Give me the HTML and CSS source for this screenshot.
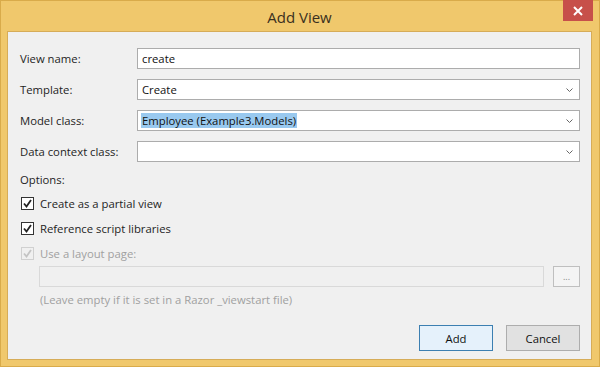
FILE: index.html
```html
<!DOCTYPE html>
<html>
    <head>
        <title>Add View</title>
        <link rel="stylesheet" href="styles.css">
    </head>
    <body>
        <div class="window">
            <div class="title-bar">
                <span class="title">Add View</span>
                <button class="close">
                    <svg width="10" height="10" viewBox="0 0 10 10">
                        <path d="M1 1 L9 9 M9 1 L1 9" stroke="#fff" stroke-width="2"/>
                    </svg>
                </button>
            </div>
            <div class="content">
                <div class="fields">
                    <label class="label">View name:</label>
                    <div class="input">create</div>

                    <label class="label">Template:</label>
                    <div class="input select">
                        <span>Create</span>
                        <svg class="arrow" width="7" height="4" viewBox="0 0 7 4"><path d="M0.5 0.5 L3.5 3.5 L6.5 0.5" fill="none" stroke="#666" stroke-width="1"/></svg>
                    </div>

                    <label class="label">Model class:</label>
                    <div class="input select">
                        <span class="selected">Employee (Example3.Models)</span>
                        <svg class="arrow" width="7" height="4" viewBox="0 0 7 4"><path d="M0.5 0.5 L3.5 3.5 L6.5 0.5" fill="none" stroke="#666" stroke-width="1"/></svg>
                    </div>

                    <label class="label">Data context class:</label>
                    <div class="input select">
                        <span></span>
                        <svg class="arrow" width="7" height="4" viewBox="0 0 7 4"><path d="M0.5 0.5 L3.5 3.5 L6.5 0.5" fill="none" stroke="#666" stroke-width="1"/></svg>
                    </div>
                </div>

                <div class="options-title">Options:</div>
                <div class="options">
                    <div class="check-row">
                        <span class="checkbox">
                            <svg width="11" height="11" viewBox="0 0 11 11"><path d="M2 5.5 L4.5 8.5 L9 2" fill="none" stroke="#222" stroke-width="1.8"/></svg>
                        </span>
                        <span>Create as a partial view</span>
                    </div>
                    <div class="check-row">
                        <span class="checkbox">
                            <svg width="11" height="11" viewBox="0 0 11 11"><path d="M2 5.5 L4.5 8.5 L9 2" fill="none" stroke="#222" stroke-width="1.8"/></svg>
                        </span>
                        <span>Reference script libraries</span>
                    </div>
                    <div class="check-row disabled">
                        <span class="checkbox">
                            <svg width="11" height="11" viewBox="0 0 11 11"><path d="M2 5.5 L4.5 8.5 L9 2" fill="none" stroke="#c4c4c4" stroke-width="1.8"/></svg>
                        </span>
                        <span>Use a layout page:</span>
                    </div>
                </div>

                <div class="layout-row">
                    <div class="input layout-input"></div>
                    <button class="browse">...</button>
                </div>
                <div class="hint">(Leave empty if it is set in a Razor _viewstart file)</div>

                <div class="actions">
                    <button class="btn default">Add</button>
                    <button class="btn">Cancel</button>
                </div>
            </div>
        </div>
    </body>
</html>
```

FILE: styles.css
```css
body {
    margin: 0;
    font-family: "Open Sans", "Noto Sans", sans-serif;
    font-size: 11.3px;
    color: #1e1e1e;
}

.window {
    width: 600px;
    height: 367px;
    box-sizing: border-box;
    border: 1px solid #d9ab4a;
    background-color: #f0c86c;
    padding: 0 7px 6px 6px;
    display: flex;
    flex-direction: column;
}

.title-bar {
    height: 30px;
    display: flex;
    align-items: center;
    justify-content: center;
    position: relative;
}

.title {
    font-size: 15px;
    color: #3a3020;
    margin-top: 2px;
}

.close {
    position: absolute;
    top: -1px;
    right: -1px;
    width: 30px;
    height: 21px;
    border: 0;
    background-color: #c7504a;
    display: flex;
    align-items: center;
    justify-content: center;
    padding: 0;
}

.content {
    flex: 1;
    border: 1px solid #d6ac58;
    background-color: #f0f0f0;
    padding: 16px 11px 0 12px;
    display: flex;
    flex-direction: column;
}

.fields {
    display: grid;
    grid-template-columns: 117px 1fr;
    row-gap: 10px;
    align-items: center;
}

.input {
    height: 21px;
    box-sizing: border-box;
    border: 1px solid #acacac;
    background-color: #fff;
    padding: 0 4px;
    display: flex;
    align-items: center;
    color: #111;
}

.select {
    justify-content: space-between;
    padding-right: 6px;
}

.selected {
    background-color: #99c9ef;
    padding: 0 1px;
    margin-left: -1px;
}

.options-title {
    margin-top: 10px;
    height: 16px;
}

.options {
    display: flex;
    flex-direction: column;
    gap: 9px;
    margin-top: 7px;
    padding-left: 1px;
}

.check-row {
    display: flex;
    align-items: center;
    gap: 6px;
    height: 16px;
}

.checkbox {
    width: 13px;
    height: 13px;
    box-sizing: border-box;
    border: 1px solid #333;
    background-color: #fff;
    display: flex;
    align-items: center;
    justify-content: center;
}

.disabled {
    color: #a0a0a0;
}

.disabled .checkbox {
    border-color: #d0d0d0;
    background-color: #f0f0f0;
}

.layout-row {
    display: flex;
    gap: 9px;
    margin-top: 5px;
    padding-left: 19px;
}

.layout-input {
    flex: 1;
    border-color: #d9d9d9;
    background-color: #f0f0f0;
}

.browse {
    width: 27px;
    height: 21px;
    border: 1px solid #bfbfbf;
    background-color: #f4f4f4;
    color: #888;
    font-size: 9px;
    padding: 0;
    font-family: inherit;
}

.hint {
    color: #a0a0a0;
    padding-left: 20px;
    margin-top: 5px;
}

.actions {
    display: flex;
    justify-content: flex-end;
    gap: 13px;
    margin-top: 18px;
}

.btn {
    width: 74px;
    height: 26px;
    border: 1px solid #adadad;
    background-color: #e1e1e1;
    font-family: inherit;
    font-size: 11.3px;
    color: #111;
}

.btn.default {
    border-color: #3c7fb1;
    background-color: #e5f1fb;
}
```
